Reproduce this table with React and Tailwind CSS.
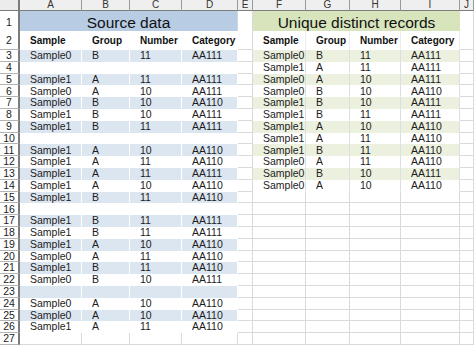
const COLS = 'grid grid-cols-[20px_62px_48px_52px_56px_15px_53px_44px_51px_59px_14px]'
const LETTERS = ['A', 'B', 'C', 'D', 'E', 'F', 'G', 'H', 'I', 'J']
const HEADS = ['Sample', 'Group', 'Number', 'Category']

// source data, rows 3..26 (null = blank row)
const SOURCE = [
  ['Sample0', 'B', '11', 'AA111'],
  null,
  ['Sample1', 'A', '11', 'AA111'],
  ['Sample0', 'A', '10', 'AA111'],
  ['Sample0', 'B', '10', 'AA110'],
  ['Sample1', 'B', '10', 'AA111'],
  ['Sample1', 'B', '11', 'AA111'],
  null,
  ['Sample1', 'A', '10', 'AA110'],
  ['Sample1', 'A', '11', 'AA110'],
  ['Sample1', 'A', '11', 'AA111'],
  ['Sample1', 'A', '10', 'AA110'],
  ['Sample1', 'B', '11', 'AA110'],
  null,
  ['Sample1', 'B', '11', 'AA111'],
  ['Sample1', 'B', '11', 'AA111'],
  ['Sample1', 'A', '10', 'AA110'],
  ['Sample0', 'A', '11', 'AA110'],
  ['Sample1', 'B', '11', 'AA110'],
  ['Sample0', 'B', '10', 'AA111'],
  null,
  ['Sample0', 'A', '10', 'AA110'],
  ['Sample0', 'A', '10', 'AA110'],
  ['Sample1', 'A', '11', 'AA110'],
]

// unique distinct records, rows 3..14
const UNIQUE = [
  ['Sample0', 'B', '11', 'AA111'],
  ['Sample1', 'A', '11', 'AA111'],
  ['Sample0', 'A', '10', 'AA111'],
  ['Sample0', 'B', '10', 'AA110'],
  ['Sample1', 'B', '10', 'AA111'],
  ['Sample1', 'B', '11', 'AA111'],
  ['Sample1', 'A', '10', 'AA110'],
  ['Sample1', 'A', '11', 'AA110'],
  ['Sample1', 'B', '11', 'AA110'],
  ['Sample0', 'A', '11', 'AA110'],
  ['Sample0', 'B', '10', 'AA111'],
  ['Sample0', 'A', '10', 'AA110'],
]

function RowNum({ n }) {
  return (
    <div className="flex items-center justify-center bg-white border-r-2 border-r-[#7c7c7c] border-b border-b-[#b5b5b5] text-[10.5px] leading-none text-[#222]">
      {n}
    </div>
  )
}

function Empty() {
  return <div className="border-r border-b border-[#dadada] bg-white" />
}

function Cell({ text, bg, border }) {
  return (
    <div className={`flex items-center pl-[10px] text-[10.5px] leading-none text-[#1c1c1c] whitespace-nowrap border-r border-b ${bg} ${border}`}>
      {text}
    </div>
  )
}

export default function App() {
  const rows = []
  for (let r = 3; r <= 27; r++) {
    const src = SOURCE[r - 3]
    const inSrc = r <= 26
    const srcBg = inSrc && r % 2 === 1 ? 'bg-[#dce6f1]' : 'bg-white'
    const uni = UNIQUE[r - 3]
    const inUni = r <= 14
    const uniBg = inUni && r % 2 === 1 ? 'bg-[#ebf1de]' : 'bg-white'

    rows.push(
      <div key={r} className={`${COLS} h-[11.8px]`}>
        <RowNum n={r} />
        {[0, 1, 2, 3].map(i => (
          <Cell
            key={i}
            text={src ? src[i] : ''}
            bg={srcBg}
            border={inSrc ? 'border-r-white border-b-transparent' : 'border-[#dadada]'}
          />
        ))}
        <Empty />
        {[0, 1, 2, 3].map(i =>
          inUni ? (
            <Cell
              key={i}
              text={uni[i]}
              bg={uniBg}
              border="border-r-[#dedede] border-b-transparent"
            />
          ) : (
            <Empty key={i} />
          )
        )}
        <Empty />
      </div>
    )
  }

  return (
    <div className="w-[474px] h-[345px] overflow-hidden bg-white font-['Liberation_Sans',Arial,sans-serif]">
      {/* column letters */}
      <div className={`${COLS} h-[11px]`}>
        <div className="bg-[#ececec] border-r-2 border-r-[#7c7c7c] border-b-2 border-b-[#7c7c7c]" />
        {LETTERS.map(l => (
          <div
            key={l}
            className="flex items-center justify-center bg-[#efefef] border-r border-r-[#9a9a9a] border-b-2 border-b-[#7c7c7c] text-[10px] leading-none text-[#333]"
          >
            {l}
          </div>
        ))}
      </div>

      {/* row 1: titles */}
      <div className={`${COLS} h-[20px]`}>
        <RowNum n={1} />
        <div className="col-span-4 flex items-center justify-center bg-[#b8cce4] border-r border-r-[#c8d6ea] text-[15.5px] text-[#111]">
          Source data
        </div>
        <Empty />
        <div className="col-span-4 flex items-center justify-center bg-[#d7e4bc] text-[15.5px] text-[#111]">
          Unique distinct records
        </div>
        <Empty />
      </div>

      {/* row 2: headings */}
      <div className={`${COLS} h-[19px]`}>
        <RowNum n={2} />
        {HEADS.map(h => (
          <div key={h} className="flex items-end pb-[2px] pl-[10px] bg-white text-[10px] font-bold text-[#111]">
            {h}
          </div>
        ))}
        <Empty />
        {HEADS.map(h => (
          <div key={h} className="flex items-end pb-[2px] pl-[10px] bg-white border-r border-r-[#ececec] text-[10px] font-bold text-[#111]">
            {h}
          </div>
        ))}
        <Empty />
      </div>

      {rows}
    </div>
  )
}
